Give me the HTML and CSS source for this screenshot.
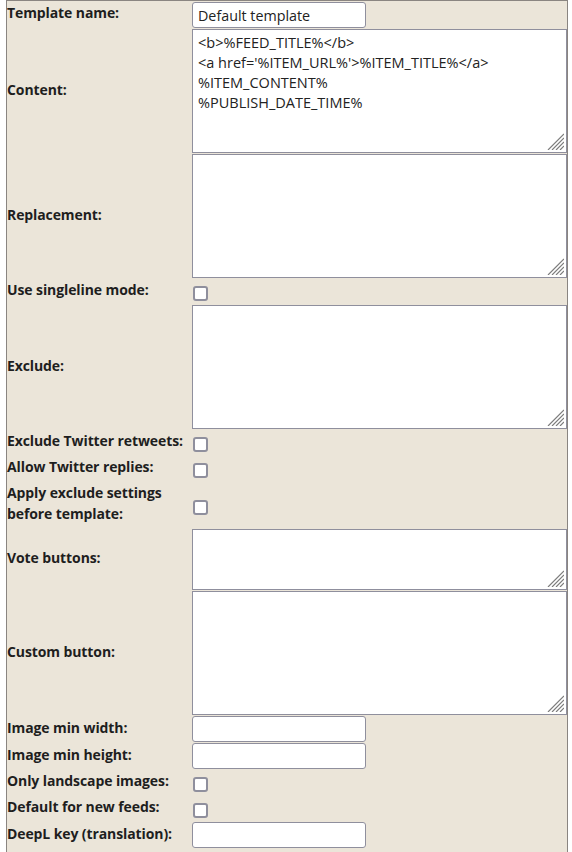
FILE: index.html
```html
<!DOCTYPE html>
<html lang="en">
<head>
<meta charset="utf-8">
<title>Template settings</title>
<link rel="stylesheet" href="styles.css">
</head>
<body>
<div class="panel">
  <div class="form">
    <div class="label">Template name:</div>
    <div class="field"><input class="text first" type="text" value="Default template"></div>

    <div class="label">Content:</div>
    <div class="field">
      <div class="area-wrap">
        <textarea class="area tall">&lt;b&gt;%FEED_TITLE%&lt;/b&gt;
&lt;a href='%ITEM_URL%'&gt;%ITEM_TITLE%&lt;/a&gt;
%ITEM_CONTENT%
%PUBLISH_DATE_TIME%</textarea>
        <svg class="grip" viewBox="0 0 17 17" width="17" height="17"><path d="M1 17L17 1M5 17L17 5M9 17L17 9M13 17L17 13"/></svg>
      </div>
    </div>

    <div class="label">Replacement:</div>
    <div class="field">
      <div class="area-wrap">
        <textarea class="area tall"></textarea>
        <svg class="grip" viewBox="0 0 17 17" width="17" height="17"><path d="M1 17L17 1M5 17L17 5M9 17L17 9M13 17L17 13"/></svg>
      </div>
    </div>

    <div class="label">Use singleline mode:</div>
    <div class="field"><input class="check" type="checkbox"></div>

    <div class="label">Exclude:</div>
    <div class="field">
      <div class="area-wrap">
        <textarea class="area tall"></textarea>
        <svg class="grip" viewBox="0 0 17 17" width="17" height="17"><path d="M1 17L17 1M5 17L17 5M9 17L17 9M13 17L17 13"/></svg>
      </div>
    </div>

    <div class="label">Exclude Twitter retweets:</div>
    <div class="field"><input class="check" type="checkbox"></div>

    <div class="label">Allow Twitter replies:</div>
    <div class="field"><input class="check" type="checkbox"></div>

    <div class="label">Apply exclude settings before template:</div>
    <div class="field"><input class="check" type="checkbox"></div>

    <div class="label">Vote buttons:</div>
    <div class="field">
      <div class="area-wrap">
        <textarea class="area short"></textarea>
        <svg class="grip" viewBox="0 0 17 17" width="17" height="17"><path d="M1 17L17 1M5 17L17 5M9 17L17 9M13 17L17 13"/></svg>
      </div>
    </div>

    <div class="label">Custom button:</div>
    <div class="field">
      <div class="area-wrap">
        <textarea class="area tall"></textarea>
        <svg class="grip" viewBox="0 0 17 17" width="17" height="17"><path d="M1 17L17 1M5 17L17 5M9 17L17 9M13 17L17 13"/></svg>
      </div>
    </div>

    <div class="label">Image min width:</div>
    <div class="field"><input class="text" type="text"></div>

    <div class="label">Image min height:</div>
    <div class="field"><input class="text" type="text"></div>

    <div class="label">Only landscape images:</div>
    <div class="field"><input class="check" type="checkbox"></div>

    <div class="label">Default for new feeds:</div>
    <div class="field"><input class="check" type="checkbox"></div>

    <div class="label">DeepL key (translation):</div>
    <div class="field"><input class="text" type="text"></div>
  </div>
</div>
</body>
</html>
```

FILE: styles.css
```css
html, body {
  margin: 0;
  padding: 0;
  background: #ffffff;
}

body {
  font-family: "Open Sans", "Noto Sans", "DejaVu Sans", sans-serif;
  color: #1e1e1e;
}

.panel {
  margin-left: 6px;
  width: 560px;
  min-height: 860px;
  background: #ebe5d9;
  border-top: 1px solid #8a8581;
  border-left: 1px solid #8a8581;
  border-right: 1px solid #8a8581;
}

.form {
  display: grid;
  grid-template-columns: 185px 375px;
  align-items: center;
}

.label {
  font-weight: 700;
  font-size: 14px;
  line-height: 21px;
  margin-bottom: 5px;
  letter-spacing: -0.1px;
}

.field {
  display: flex;
  flex-direction: column;
  justify-content: center;
}

.text {
  box-sizing: border-box;
  width: 174px;
  height: 26px;
  margin: 0 0 1px 0;
  padding: 0 5px;
  border: 1px solid #8f8f9d;
  border-radius: 3px;
  background: #ffffff;
  font-family: "Open Sans", "Noto Sans", sans-serif;
  font-size: 14.3px;
  color: #222222;
  outline: none;
}

.text.first {
  margin-top: 1px;
}

.area-wrap {
  position: relative;
  margin-bottom: 1px;
}

.area {
  display: block;
  box-sizing: border-box;
  width: 375px;
  margin: 0;
  padding: 3px 5px;
  border: 1px solid #8f8f9d;
  border-radius: 0;
  background: #ffffff;
  font-family: "Open Sans", "Noto Sans", sans-serif;
  font-size: 14.5px;
  line-height: 20px;
  color: #222222;
  resize: none;
  overflow: hidden;
  outline: none;
}

.tall {
  height: 124px;
}

.short {
  height: 61px;
}

.grip {
  position: absolute;
  right: 3px;
  bottom: 3px;
  pointer-events: none;
}

.grip path {
  stroke: #7d7d7d;
  stroke-width: 1.2;
  fill: none;
}

.check {
  appearance: none;
  -webkit-appearance: none;
  box-sizing: border-box;
  width: 15px;
  height: 15px;
  margin: 7px 0 4px 1px;
  border: 2px solid #8f8f9d;
  border-radius: 3px;
  background: #ffffff;
}
```
